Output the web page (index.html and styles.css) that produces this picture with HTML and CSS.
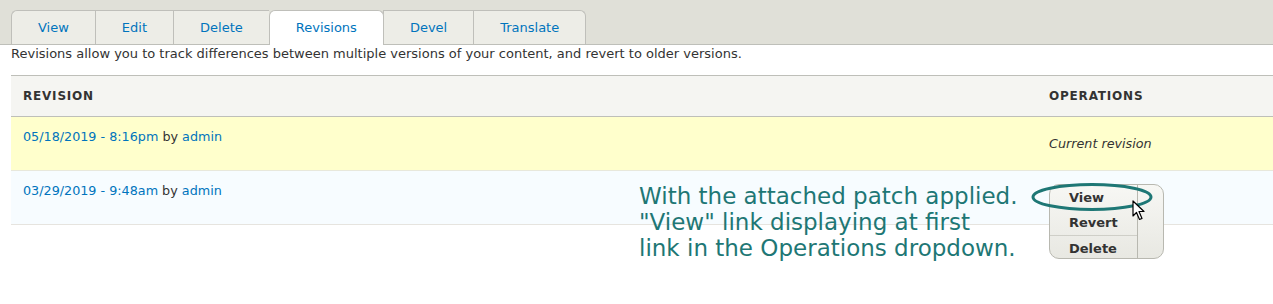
FILE: index.html
```html
<!DOCTYPE html>
<html lang="en">
<head>
    <meta charset="UTF-8">
    <meta name="viewport" content="width=device-width, initial-scale=1.0">
    <title>Revisions</title>
    <link rel="stylesheet" href="styles.css">
</head>
<body>
    <div class="cabecera">
        <ul class="pestanas">
            <li><a href="#">View</a></li>
            <li><a href="#">Edit</a></li>
            <li><a href="#">Delete</a></li>
            <li class="activa"><a href="#">Revisions</a></li>
            <li><a href="#">Devel</a></li>
            <li><a href="#">Translate</a></li>
        </ul>
    </div>

    <div class="contenido">
        <p class="descripcion">Revisions allow you to track differences between multiple versions of your content, and revert to older versions.</p>

        <table class="revisiones">
            <thead>
                <tr>
                    <th>Revision</th>
                    <th class="col_operaciones">Operations</th>
                </tr>
            </thead>
            <tbody>
                <tr class="actual">
                    <td class="celda_rev"><a href="#">05/18/2019 - 8:16pm</a> by <a href="#">admin</a></td>
                    <td class="celda_op"><em>Current revision</em></td>
                </tr>
                <tr class="anterior">
                    <td class="celda_rev"><a href="#">03/29/2019 - 9:48am</a> by <a href="#">admin</a></td>
                    <td class="celda_op"></td>
                </tr>
            </tbody>
        </table>

        <p class="nota">With the attached patch applied.<br>"View" link displaying at first<br>link in the Operations dropdown.</p>

        <div class="dropbutton">
            <ul class="acciones">
                <li><a href="#">View</a></li>
                <li><a href="#">Revert</a></li>
                <li class="separada"><a href="#">Delete</a></li>
            </ul>
            <div class="toggle"></div>
        </div>

        <svg class="ovalo" width="130" height="36" viewBox="0 0 130 36">
            <ellipse cx="63" cy="14" rx="59" ry="12.5" fill="none" stroke="#1e7775" stroke-width="3"/>
        </svg>

        <svg class="cursor" width="16" height="22" viewBox="0 0 16 22">
            <path d="M1 1 L1 16 L4.5 12.5 L7.5 19.5 L10 18.4 L7 11.5 L12 11.5 Z" fill="#fff" stroke="#000" stroke-width="1.2" stroke-linejoin="round"/>
        </svg>
    </div>
</body>
</html>
```

FILE: styles.css
```css
html{
    font-family: "DejaVu Sans", Verdana, sans-serif;
    color: #333;
}

body{
    margin: 0;
    background: #fff;
    min-height: 304px;
}

a{
    color: #0074bd;
    text-decoration: none;
}

.cabecera{
    background: #e0e0d8;
    border-bottom: 1px solid #bebfb9;
    height: 44px;
}

.pestanas{
    list-style: none;
    margin: 0;
    padding: 10px 0 0 11px;
    display: flex;
}

.pestanas li{
    height: 33px;
    border: 1px solid #bfbfba;
    border-bottom: none;
    border-right: none;
    background: #ededE7;
    display: flex;
    align-items: center;
}

.pestanas li:first-child{
    border-top-left-radius: 6px;
}

.pestanas li:last-child{
    border-right: 1px solid #bfbfba;
    border-top-right-radius: 6px;
}

.pestanas li.activa{
    background: #fff;
    height: 34px;
    border-right: 1px solid #bfbfba;
    border-radius: 6px 6px 0 0;
    margin-right: -1px;
    position: relative;
    z-index: 1;
}

.pestanas a{
    font-size: 13px;
    padding: 0 26px;
    line-height: 18px;
}

.contenido{
    position: relative;
    padding: 0 0 80px 11px;
}

.descripcion{
    font-size: 13px;
    line-height: 18px;
    margin: 0 0 12px 0;
}

.revisiones{
    width: 100%;
    border-collapse: collapse;
    font-size: 12.75px;
}

.revisiones th{
    text-align: left;
    background: #f5f5f2;
    border-top: 1px solid #bebfb9;
    border-bottom: 1px solid #bebfb9;
    height: 40px;
    padding: 0 12px;
    text-transform: uppercase;
    font-size: 12px;
    letter-spacing: 0.8px;
    font-weight: bold;
}

.revisiones .col_operaciones{
    width: 212px;
}

.revisiones td{
    height: 54px;
    padding: 0 12px;
    border-bottom: 1px solid #e6e4df;
    line-height: 18px;
    box-sizing: border-box;
}

.revisiones .celda_rev{
    vertical-align: top;
    padding-top: 11px;
}

.revisiones .celda_op{
    vertical-align: middle;
}

.actual td{
    background: #ffffcc;
    border-bottom-color: #e8e8dc;
}

.anterior td{
    background: #f7fcff;
}

.nota{
    position: absolute;
    left: 639px;
    top: 138px;
    margin: 0;
    font-size: 23px;
    line-height: 26px;
    color: #1e7775;
}

.dropbutton{
    position: absolute;
    left: 1049px;
    top: 139px;
    width: 113px;
    height: 73px;
    border: 1px solid #b8b8b0;
    border-radius: 10px;
    background: linear-gradient(to bottom, #f7f7f4, #e8e8e2);
    display: flex;
    overflow: hidden;
}

.acciones{
    list-style: none;
    margin: 0;
    padding: 0;
    flex: 1;
}

.acciones li{
    height: 25px;
    display: flex;
    align-items: center;
    padding-left: 19px;
}

.acciones li.separada{
    border-top: 1px solid #cfcfc8;
    height: 24px;
}

.acciones a{
    color: #333;
    font-weight: bold;
    font-size: 13px;
}

.toggle{
    width: 25px;
    border-left: 1px solid #b8b8b0;
}

.ovalo{
    position: absolute;
    left: 1029px;
    top: 138px;
}

.cursor{
    position: absolute;
    left: 1132px;
    top: 155px;
}
```
